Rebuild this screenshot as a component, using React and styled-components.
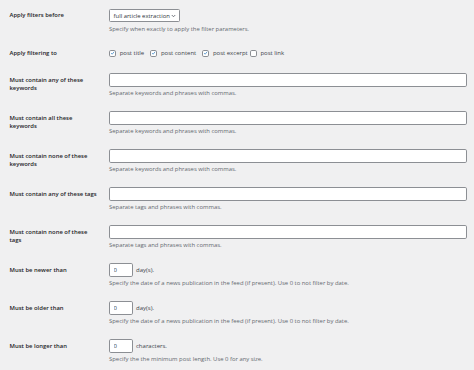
import React from 'react';
import styled, { createGlobalStyle } from 'styled-components';

const GlobalStyle = createGlobalStyle`
  html, body {
    margin: 0;
    padding: 0;
    background: #f0f0f1;
  }
  body {
    font-family: "Open Sans", "Noto Sans", sans-serif;
    color: #1d2327;
  }
`;

const Page = styled.div`
  width: 474px;
  height: 370px;
  box-sizing: border-box;
  padding: 2px 7px 0 9.5px;
  overflow: hidden;
  font-size: 6px;
`;

const Row = styled.div`
  display: grid;
  grid-template-columns: 99.5px 1fr;
`;

const Label = styled.div`
  padding: 9px 9.5px 9px 0;
  font-size: 5.9px;
  line-height: 8.2px;
  font-weight: 600;
  white-space: nowrap;
`;

const Field = styled.div`
  padding: 6.75px 0;
`;

const Description = styled.p`
  margin: 2.5px 0 0;
  font-size: 5.9px;
  line-height: 8.5px;
  color: #646970;
  white-space: nowrap;
`;

const Select = styled.div`
  display: flex;
  align-items: center;
  justify-content: space-between;
  box-sizing: border-box;
  width: 71px;
  height: 13.5px;
  padding: 0 3.5px 0 3.6px;
  background: #fff;
  border: 0.5px solid #8c8f94;
  border-radius: 1.4px;
  font-size: 5.9px;
  color: #2c3338;
  white-space: nowrap;
`;

const TextInput = styled.input`
  display: block;
  box-sizing: border-box;
  width: ${(p) => p.$width || '100%'};
  height: 13.5px;
  margin: 0;
  padding: 0 3.6px;
  background: #fff;
  border: 0.5px solid #8c8f94;
  border-radius: 1.8px;
  font-family: inherit;
  font-size: 6px;
  color: #2c3338;
  outline: none;
`;

const Inline = styled.div`
  display: flex;
  align-items: center;
  gap: 3px;
  font-size: 6px;
  color: #3c434a;
`;

const CheckGroup = styled.div`
  display: flex;
  align-items: center;
  height: 13px;
  font-size: 6px;
  color: #3c434a;
  white-space: nowrap;
`;

const CheckLabel = styled.label`
  display: inline-flex;
  align-items: center;
  gap: 3.5px;
  margin-right: ${(p) => p.$gap ?? 6}px;
`;

const Box = styled.span`
  display: inline-flex;
  align-items: center;
  justify-content: center;
  box-sizing: border-box;
  width: 7.2px;
  height: 7.2px;
  background: #fff;
  border: 0.5px solid #8c8f94;
  border-radius: 1.8px;
`;

const Chevron = () => (
  <svg width="5" height="4" viewBox="0 0 10 8">
    <path d="M1.5 2 L5 5.5 L8.5 2" fill="none" stroke="#50575e" strokeWidth="1.6" />
  </svg>
);

const Check = ({ checked, text, gap }) => (
  <CheckLabel $gap={gap}>
    <Box>
      {checked && (
        <svg width="6" height="6" viewBox="0 0 12 12">
          <path d="M2.5 6.2 L5 8.8 L9.6 3" fill="none" stroke="#3582c4" strokeWidth="1.7" />
        </svg>
      )}
    </Box>
    {text}
  </CheckLabel>
);

const LabelText = ({ lines }) => (
  <Label>
    {lines.map((line, i) => (
      <div key={i}>{line}</div>
    ))}
  </Label>
);

const KW = 'Separate keywords and phrases with commas.';
const TAGS = 'Separate tags and phrases with commas.';
const DATE =
  'Specify the date of a news publication in the feed (if present). Use 0 to not filter by date.';

const textRows = [
  [['Must contain any of these', 'keywords'], KW],
  [['Must contain all these', 'keywords'], KW],
  [['Must contain none of these', 'keywords'], KW],
  [['Must contain any of these tags'], TAGS],
  [['Must contain none of these', 'tags'], TAGS],
];

const numberRows = [
  ['Must be newer than', 'day(s).', DATE],
  ['Must be older than', 'day(s).', DATE],
  ['Must be longer than', 'characters.', 'Specify the the minimum post length. Use 0 for any size.'],
];

export default function App() {
  return (
    <>
      <GlobalStyle />
      <Page>
        <Row>
          <LabelText lines={['Apply filters before']} />
          <Field>
            <Select>
              full article extraction
              <Chevron />
            </Select>
            <Description>Specify when exactly to apply the filter parameters.</Description>
          </Field>
        </Row>
        <Row>
          <LabelText lines={['Apply filtering to']} />
          <Field>
            <CheckGroup>
              <Check checked text="post title" />
              <Check checked text="post content" />
              <Check checked text="post excerpt" gap={2} />
              <Check text="post link" />
            </CheckGroup>
          </Field>
        </Row>
        {textRows.map(([lines, desc]) => (
          <Row key={lines.join(' ')}>
            <LabelText lines={lines} />
            <Field>
              <TextInput type="text" defaultValue="" />
              <Description>{desc}</Description>
            </Field>
          </Row>
        ))}
        {numberRows.map(([label, unit, desc]) => (
          <Row key={label}>
            <LabelText lines={[label]} />
            <Field>
              <Inline>
                <TextInput type="text" defaultValue="0" $width="24px" />
                {unit}
              </Inline>
              <Description>{desc}</Description>
            </Field>
          </Row>
        ))}
      </Page>
    </>
  );
}
